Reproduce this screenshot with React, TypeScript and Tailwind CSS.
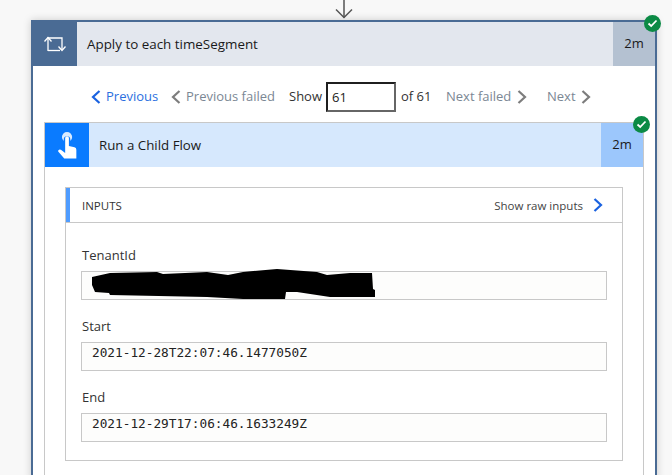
import React from "react";

const uiFont = "font-['Open_Sans','Noto_Sans',sans-serif]";

const Chevron = ({ dir, className }: { dir: "left" | "right"; className: string }) => (
  <svg width="10" height="14" viewBox="0 0 10 14" fill="none" className={className}>
    <path
      d={dir === "left" ? "M8.5 1 L2 7 L8.5 13" : "M1.5 1 L8 7 L1.5 13"}
      stroke="currentColor"
      strokeWidth="2.2"
    />
  </svg>
);

const CheckBadge = ({ className }: { className: string }) => (
  <div
    className={`absolute flex h-[17px] w-[17px] items-center justify-center rounded-full bg-[#0b8a45] ${className}`}
  >
    <svg width="11" height="9" viewBox="0 0 11 9" fill="none">
      <path d="M1.5 4.5 L4.2 7 L9.5 1.5" stroke="white" strokeWidth="1.8" />
    </svg>
  </div>
);

const LoopIcon = () => (
  <svg width="22" height="16" viewBox="0 0 22 16" fill="none" stroke="white" strokeWidth="1.3">
    <path d="M4 15 V2 H18 V14" />
    <path d="M4 14.5 H16" />
    <path d="M0.5 5.5 L4 1.5 L7.5 5.5" />
    <path d="M14.5 10.5 L18 14.5 L21.5 10.5" />
  </svg>
);

const HandIcon = () => (
  <svg width="21" height="27" viewBox="0 0 22 29" fill="white">
    <path
      d="M5 5.5 A5.5 5.5 0 0 1 16 5.5 A5.5 5.5 0 0 1 14 9.8 V8 A3.5 3.5 0 1 0 7 8 V9.8 A5.5 5.5 0 0 1 5 5.5 Z"
      opacity="0.85"
    />
    <path d="M8.5 6.5 A2 2 0 0 1 12.5 6.5 V15 L18.5 16.5 Q20.5 17 20.5 19 V28.5 H7.5 L1 21 Q0.5 19.5 2 19 Q3.5 18.5 5 20 L8.5 22.5 Z" />
  </svg>
);

const Field = ({ label, value }: { label: string; value?: string }) => (
  <div className="mb-[16px]">
    <div className="mb-[6px] h-[20px] pl-[1px] text-[13px] leading-[20px] text-[#333]">{label}</div>
    <div className="h-[29px] border border-[#c8c8c8] bg-[#fdfdfc] pl-[10px] font-['DejaVu_Sans_Mono',monospace] text-[12.75px] leading-[20px] text-[#222]">
      {value}
    </div>
  </div>
);

export default function App() {
  return (
    <div className={`h-[475px] w-[672px] overflow-hidden bg-[#f8f8f8] ${uiFont}`}>
      <div className="flex h-[20px] justify-center pl-[16px]">
        <svg width="18" height="19" viewBox="0 0 18 19" fill="none" stroke="#555" strokeWidth="1.5">
          <path d="M9 0 V17.5" />
          <path d="M1 9.5 L9 17.5 L17 9.5" />
        </svg>
      </div>

      {/* outer loop card */}
      <div className="relative ml-[31px] h-[460px] w-[626px] border-2 border-b-0 border-[#4a6b94] bg-white shadow-[0_0_8px_rgba(0,0,0,0.18)]">
        <CheckBadge className="right-[-6px] top-[-7px]" />
        <div className="flex h-[44px] items-center bg-[#e3e7ee]">
          <div className="flex h-full w-[44px] items-center justify-center bg-[#4a6b94]">
            <LoopIcon />
          </div>
          <div className="flex-1 pl-[10px] text-[13.4px] text-[#1a1a1a]">Apply to each timeSegment</div>
          <div className="flex h-full w-[42px] items-center justify-center bg-[#b4c1d1] text-[13px] text-[#1a1a1a]">
            2m
          </div>
        </div>

        {/* paging */}
        <div className="flex h-[56px] items-center pl-[58px] pt-[6px] text-[13px] text-[#7b8794]">
          <Chevron dir="left" className="text-[#1a62e0]" />
          <span className="ml-[5px] w-[65px] text-[#2b6fe0]">Previous</span>
          <Chevron dir="left" className="text-[#7d7d7d]" />
          <span className="ml-[5px] w-[103px]">Previous failed</span>
          <span className="w-[37px] text-[#333]">Show</span>
          <input
            readOnly
            value="61"
            className="h-[30px] w-[70px] border-2 border-[#1f1f1f] border-b-[#666] border-r-[#666] bg-white pl-[4px] text-[13px] text-[#222] outline-none"
          />
          <span className="ml-[5px] w-[45px] text-[#333]">of 61</span>
          <span className="w-[71px]">Next failed</span>
          <Chevron dir="right" className="text-[#7d7d7d]" />
          <span className="ml-[20px] w-[34px]">Next</span>
          <Chevron dir="right" className="text-[#7d7d7d]" />
        </div>

        {/* inner action card */}
        <div className="relative ml-[11px] h-[360px] w-[600px] border border-b-0 border-[#c8c8c8] bg-white">
          <CheckBadge className="right-[-7px] top-[-7px]" />
          <div className="flex h-[44px] items-center bg-[#d6e8fd]">
            <div className="flex h-full w-[44px] items-center justify-center bg-[#0a7bff]">
              <HandIcon />
            </div>
            <div className="flex-1 pl-[10px] pt-[1px] text-[13.3px] text-[#1a1a1a]">Run a Child Flow</div>
            <div className="flex h-full w-[42px] items-center justify-center bg-[#9cc7fc] text-[13px] text-[#1a1a1a]">
              2m
            </div>
          </div>

          {/* inputs panel */}
          <div className="ml-[20px] mt-[20px] h-[274px] w-[558px] border border-[#c8c8c8]">
            <div className="flex h-[35px] items-center border-b border-[#c8c8c8]">
              <div className="h-full w-[4px] bg-[#4f9cff]" />
              <div className="flex-1 pl-[12px] pt-[1px] text-[11.5px] text-[#333]">INPUTS</div>
              <div className="pt-[1px] text-[11.5px] text-[#444]">Show raw inputs</div>
              <Chevron dir="right" className="ml-[10px] mr-[19px] text-[#1a62e0]" />
            </div>
            <div className="relative ml-[15px] w-[526px] pt-[22px]">
              <Field label="TenantId" />
              <Field label="Start" value="2021-12-28T22:07:46.1477050Z" />
              <Field label="End" value="2021-12-29T17:06:46.1633249Z" />
              {/* blacked-out value */}
              <svg width="290" height="34" viewBox="88 267 290 34" className="absolute left-[7px] top-[44px]">
                <path
                  fill="black"
                  d="M92 277 L110 273 L157 272 L163 274 L207 272 L228 275 L243 272 L277 269 L317 272 L327 275 L350 273 L372 273 L373 289 L375 290 L375 297 L330 297 L297 292 L286 292 L285 299 L243 299 L207 297 L110 295 L109 293 L95 292 L92 285 Z"
                />
              </svg>
            </div>
          </div>
        </div>
      </div>
    </div>
  );
}
